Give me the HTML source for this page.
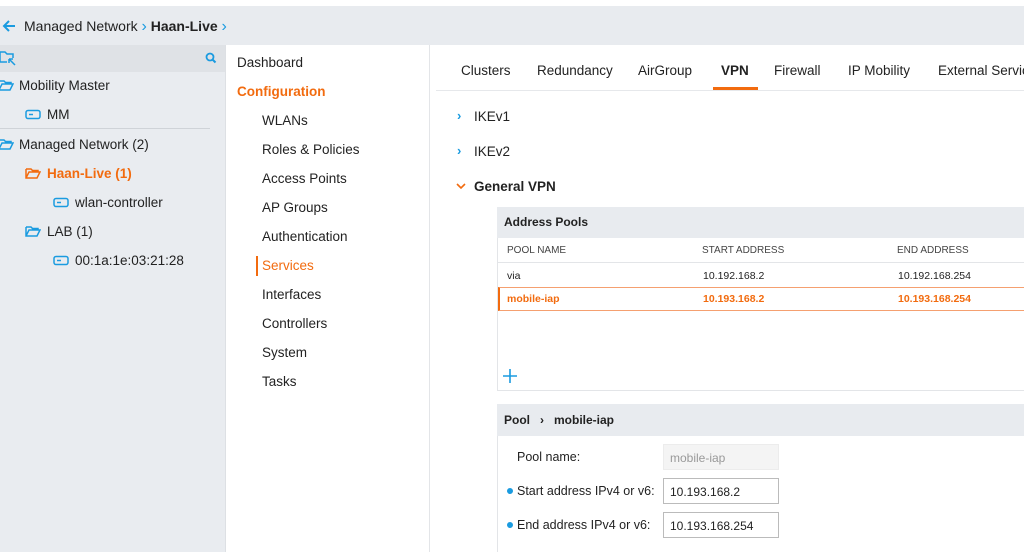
<!DOCTYPE html>
<html><head><meta charset="utf-8"><style>
*{margin:0;padding:0;box-sizing:border-box}
body{width:1024px;height:552px;overflow:hidden;background:#fff;font-family:"Liberation Sans",sans-serif;color:#222;position:relative}
.a{position:absolute;white-space:nowrap}
.t{font-size:13.5px}
.o{color:#f26b0f}
.b{font-weight:bold}
.blue{color:#1a9be0}
</style></head><body>
<div class="a" style="left:0;top:6px;width:1024px;height:39px;background:#e8ebef"></div>
<svg class="a" style="left:2px;top:19px" width="14" height="14" viewBox="0 0 14 14"><path d="M13 7H2M7 2L2 7l5 5" stroke="#1a9be0" stroke-width="2" fill="none"/></svg>
<div class="a t" style="left:24px;top:18px;font-size:14px">Managed Network <span class="blue" style="font-size:16px">›</span> <b>Haan-Live</b> <span class="blue" style="font-size:16px">›</span></div>

<div class="a" style="left:0;top:45px;width:225px;height:507px;background:#e9ecf0"></div>
<div class="a" style="left:0;top:45px;width:225px;height:27px;background:#dfe2e6"></div>
<svg class="a" style="left:0;top:50px" width="18" height="16" viewBox="0 0 18 16"><path d="M0 2h5l2 2h6v4M0 2v10h7M9 9l6 6M9 9v4M9 9h4" stroke="#1a9be0" stroke-width="1.5" fill="none"/></svg>
<svg class="a" style="left:205px;top:52px" width="12" height="12" viewBox="0 0 12 12"><circle cx="5" cy="5" r="3.5" stroke="#1a9be0" stroke-width="1.8" fill="none"/><path d="M7.5 7.5l3 3" stroke="#1a9be0" stroke-width="2"/></svg>
<div class="a" style="left:0;top:128px;width:210px;height:1px;background:#cfd3d8"></div>

<svg width="0" height="0" style="position:absolute"><defs>
<symbol id="fd" viewBox="0 0 16 13"><path d="M1 2h5l1.5 1.5H13V5M1 2v9h11l3-6H4L1 11" stroke="currentColor" stroke-width="1.5" fill="none"/></symbol>
<symbol id="dv" viewBox="0 0 16 11"><rect x="1" y="1.5" width="14" height="8" rx="2" stroke="currentColor" stroke-width="1.5" fill="none"/><path d="M4 5.5h4" stroke="currentColor" stroke-width="1.5"/></symbol>
</defs></svg>
<svg class="a blue" style="left:-2px;top:79px" width="16" height="13"><use href="#fd"/></svg>
<div class="a t" style="left:19px;top:78px">Mobility Master</div>
<svg class="a blue" style="left:25px;top:109px" width="16" height="11"><use href="#dv"/></svg>
<div class="a t" style="left:47px;top:107px">MM</div>
<svg class="a blue" style="left:-2px;top:138px" width="16" height="13"><use href="#fd"/></svg>
<div class="a t" style="left:19px;top:137px">Managed Network (2)</div>
<svg class="a o" style="left:25px;top:167px" width="16" height="13"><use href="#fd"/></svg>
<div class="a t o b" style="left:47px;top:166px">Haan-Live (1)</div>
<svg class="a blue" style="left:53px;top:197px" width="16" height="11"><use href="#dv"/></svg>
<div class="a t" style="left:75px;top:195px">wlan-controller</div>
<svg class="a blue" style="left:25px;top:225px" width="16" height="13"><use href="#fd"/></svg>
<div class="a t" style="left:47px;top:224px">LAB (1)</div>
<svg class="a blue" style="left:53px;top:255px" width="16" height="11"><use href="#dv"/></svg>
<div class="a t" style="left:75px;top:253px">00:1a:1e:03:21:28</div>

<div class="a" style="left:225px;top:45px;width:1px;height:507px;background:#dde0e4"></div>
<div class="a" style="left:429px;top:45px;width:1px;height:507px;background:#e3e5e8"></div>
<div class="a t" style="left:237px;top:55px">Dashboard</div>
<div class="a t o b" style="left:237px;top:84px">Configuration</div>
<div class="a t" style="left:262px;top:113px">WLANs</div>
<div class="a t" style="left:262px;top:142px">Roles &amp; Policies</div>
<div class="a t" style="left:262px;top:171px">Access Points</div>
<div class="a t" style="left:262px;top:200px">AP Groups</div>
<div class="a t" style="left:262px;top:229px">Authentication</div>
<div class="a" style="left:256px;top:256px;width:2px;height:20px;background:#f26b0f"></div>
<div class="a t o" style="left:262px;top:258px">Services</div>
<div class="a t" style="left:262px;top:287px">Interfaces</div>
<div class="a t" style="left:262px;top:316px">Controllers</div>
<div class="a t" style="left:262px;top:345px">System</div>
<div class="a t" style="left:262px;top:374px">Tasks</div>

<div class="a t" style="left:461px;top:63px">Clusters</div>
<div class="a t" style="left:537px;top:63px">Redundancy</div>
<div class="a t" style="left:638px;top:63px">AirGroup</div>
<div class="a t b" style="left:721px;top:63px">VPN</div>
<div class="a t" style="left:774px;top:63px">Firewall</div>
<div class="a t" style="left:848px;top:63px">IP Mobility</div>
<div class="a t" style="left:938px;top:63px">External Services</div>
<div class="a" style="left:436px;top:90px;width:588px;height:1px;background:#e6e8eb"></div>
<div class="a" style="left:713px;top:87px;width:45px;height:3px;background:#f26b0f"></div>

<div class="a blue b" style="left:457px;top:108px;font-size:13px">›</div>
<div class="a t" style="left:474px;top:109px">IKEv1</div>
<div class="a blue b" style="left:457px;top:143px;font-size:13px">›</div>
<div class="a t" style="left:474px;top:144px">IKEv2</div>
<svg class="a" style="left:456px;top:183px" width="10" height="7"><path d="M1 1l4 4 4-4" stroke="#f26b0f" stroke-width="1.6" fill="none"/></svg>
<div class="a t b" style="left:474px;top:179px">General VPN</div>

<div class="a" style="left:497px;top:207px;width:527px;height:184px;border:1px solid #e3e5e8;border-right:none"></div>
<div class="a" style="left:497px;top:207px;width:527px;height:31px;background:#e8ebef"></div>
<div class="a b" style="left:504px;top:215px;font-size:12px">Address Pools</div>
<div class="a" style="left:498px;top:262px;width:526px;height:1px;background:#e3e5e8"></div>
<div class="a" style="left:507px;top:245px;font-size:10px;color:#444">POOL NAME</div>
<div class="a" style="left:702px;top:245px;font-size:10px;color:#444">START ADDRESS</div>
<div class="a" style="left:897px;top:245px;font-size:10px;color:#444">END ADDRESS</div>
<div class="a" style="left:507px;top:270px;font-size:10.5px">via</div>
<div class="a" style="left:703px;top:270px;font-size:10.5px">10.192.168.2</div>
<div class="a" style="left:898px;top:270px;font-size:10.5px">10.192.168.254</div>
<div class="a" style="left:498px;top:287px;width:526px;height:24px;border:1px solid #f5a070;border-left:2px solid #f26b0f;border-right:none"></div>
<div class="a o b" style="left:507px;top:293px;font-size:10.5px">mobile-iap</div>
<div class="a o b" style="left:703px;top:293px;font-size:10.5px">10.193.168.2</div>
<div class="a o b" style="left:898px;top:293px;font-size:10.5px">10.193.168.254</div>
<svg class="a" style="left:503px;top:369px" width="14" height="14"><path d="M7 0v14M0 7h14" stroke="#1a9be0" stroke-width="1.6"/></svg>

<div class="a" style="left:497px;top:404px;width:527px;height:148px;border-left:1px solid #e3e5e8"></div>
<div class="a" style="left:497px;top:404px;width:527px;height:32px;background:#e8ebef"></div>
<div class="a b" style="left:504px;top:413px;font-size:12px">Pool &nbsp;&nbsp;›&nbsp;&nbsp; mobile-iap</div>
<div class="a" style="left:517px;top:450px;font-size:12.5px">Pool name:</div>
<div class="a" style="left:663px;top:444px;width:116px;height:26px;background:#f4f4f4;border:1px solid #ececec;font-size:12px;color:#999;padding:6px 6px">mobile-iap</div>
<div class="a" style="left:507px;top:488px;width:6px;height:6px;border-radius:50%;background:#1a9be0"></div>
<div class="a" style="left:517px;top:484px;font-size:12.5px">Start address IPv4 or v6:</div>
<div class="a" style="left:663px;top:478px;width:116px;height:26px;border:1px solid #bbb;font-size:12px;padding:6px 6px">10.193.168.2</div>
<div class="a" style="left:507px;top:522px;width:6px;height:6px;border-radius:50%;background:#1a9be0"></div>
<div class="a" style="left:517px;top:518px;font-size:12.5px">End address IPv4 or v6:</div>
<div class="a" style="left:663px;top:512px;width:116px;height:26px;border:1px solid #bbb;font-size:12px;padding:6px 6px">10.193.168.254</div>
</body></html>
